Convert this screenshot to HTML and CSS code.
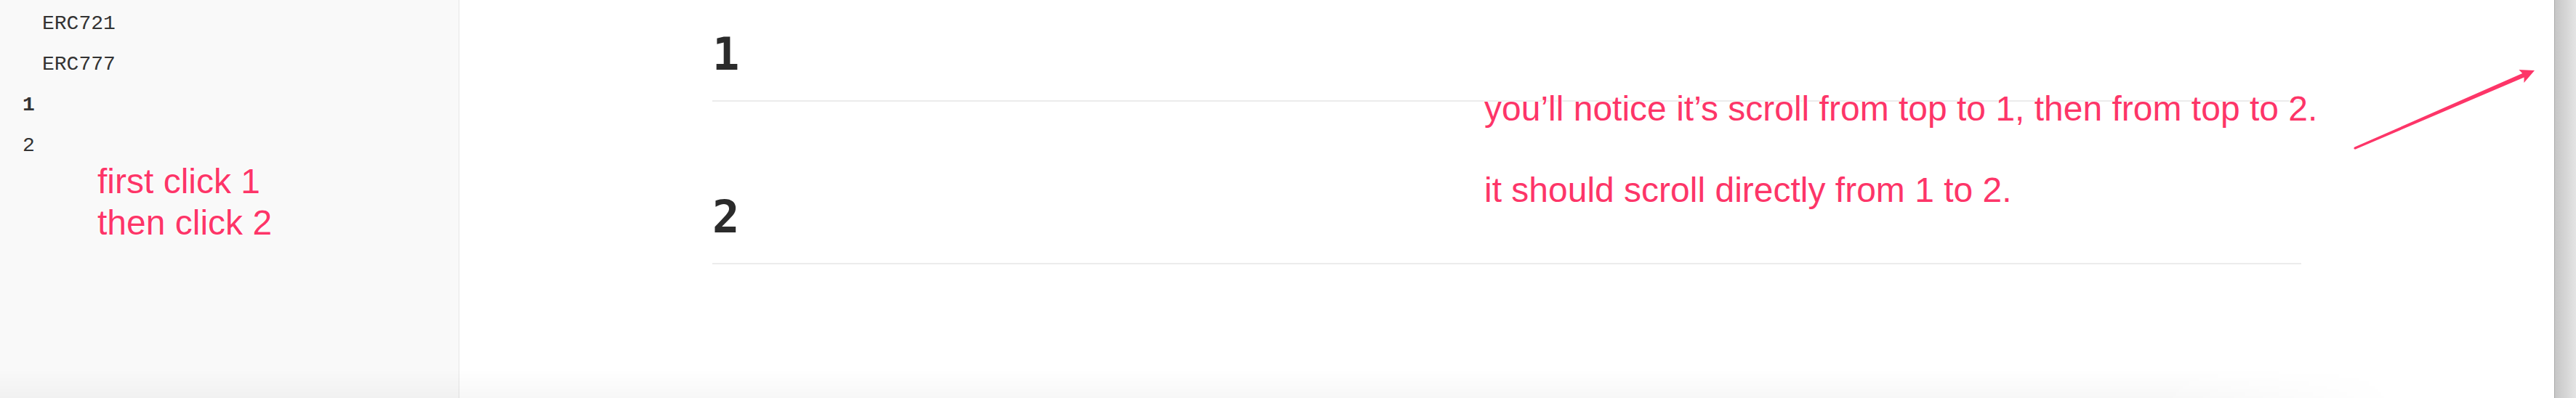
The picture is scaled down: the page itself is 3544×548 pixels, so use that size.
FILE: index.html
```html
<!DOCTYPE html>
<html lang="en">
<head>
<meta charset="UTF-8">
<meta name="viewport" content="width=device-width, initial-scale=1.0">
<title>Scroll to anchor</title>
<link rel="stylesheet" href="styles.css">
</head>
<body>

<div class="page">
  <nav class="sidebar">
    <ul class="toc">
      <li class="toc-sub">ERC721</li>
      <li class="toc-sub">ERC777</li>
      <li class="toc-item active">1</li>
      <li class="toc-item">2</li>
    </ul>
  </nav>

  <main class="main">
    <div class="content">
      <h2 class="section-title" id="s1">1</h2>
      <h2 class="section-title" id="s2">2</h2>
    </div>
  </main>

  <div class="scroll-track"></div>

  <div class="note note-left">
    <p>first click 1</p>
    <p>then click 2</p>
  </div>

  <div class="note note-right">
    <p>you’ll notice it’s scroll from top to 1, then from top to 2.</p>
    <p class="gap">it should scroll directly from 1 to 2.</p>
  </div>

  <svg class="arrow" width="270" height="130" viewBox="0 0 270 130">
    <polygon points="9.4,117.6 240.2,16.0 235.5,11.0 257,12 242.4,29 242.6,21.6 10.6,120.4" fill="#fd3568"/>
    <circle cx="10" cy="119" r="1.6" fill="#fd3568"/>
  </svg>
</div>

</body>
</html>
```

FILE: styles.css
```css
html, body {
  margin: 0;
  height: 100%;
  background-color: #fff;
  overflow: hidden;
}
.page {
  position: relative;
  display: flex;
  height: 548px;
}
.page::after {
  content: "";
  position: absolute;
  left: 0;
  bottom: 0;
  width: 3300px;
  height: 40px;
  background: linear-gradient(to bottom, rgba(0, 0, 0, 0), rgba(0, 0, 0, 0.03));
  -webkit-mask-image: linear-gradient(to right, #000 90%, transparent);
  mask-image: linear-gradient(to right, #000 90%, transparent);
  pointer-events: none;
}
.sidebar {
  width: 631px;
  flex-shrink: 0;
  background-color: #f9f9f9;
  border-right: 1px solid #e6e6e6;
  padding-top: 5px;
}
.toc {
  list-style: none;
  margin: 0;
  padding: 0;
  font-family: "Liberation Mono", "Courier New", monospace;
  font-size: 28px;
  line-height: 56px;
  color: #333;
}
.toc-sub {
  padding-left: 58px;
}
.toc-item {
  padding-left: 31px;
}
.toc-item.active {
  font-weight: bold;
}
.main {
  flex: 1;
  min-width: 0;
  padding-top: 38px;
}
.content {
  width: 2186px;
  margin: 0 auto;
}
.section-title {
  margin: 0 0 122px;
  font-family: "DejaVu Sans Mono", monospace;
  font-weight: bold;
  font-size: 62px;
  line-height: 74px;
  color: #2b2b2b;
  padding-bottom: 26px;
  border-bottom: 2px solid #ececec;
}
.scroll-track {
  width: 29px;
  flex-shrink: 0;
  border-left: 1px solid #a9a9a9;
  background: linear-gradient(to right, #c6c6c6, #e4e4e4);
}
.note {
  position: absolute;
  font-family: "Liberation Sans", Arial, sans-serif;
  font-size: 48px;
  line-height: 57px;
  color: #fd3568;
  text-shadow: 0 0 2px #fff, 0 0 3px #fff, 0 0 4px #fff;
}
.note p {
  margin: 0;
  white-space: nowrap;
}
.note .gap {
  margin-top: 55px;
}
.note-left {
  left: 134px;
  top: 221px;
}
.note-right {
  left: 2042px;
  top: 121px;
}
.arrow {
  position: absolute;
  left: 3230px;
  top: 85px;
}
```
